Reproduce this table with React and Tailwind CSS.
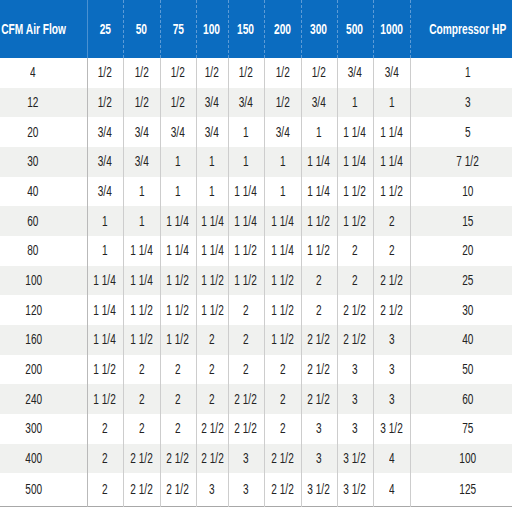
const sizes = ['25', '50', '75', '100', '150', '200', '300', '500', '1000'];

const rows = [
  ['4', ['1/2', '1/2', '1/2', '1/2', '1/2', '1/2', '1/2', '3/4', '3/4'], '1'],
  ['12', ['1/2', '1/2', '1/2', '3/4', '3/4', '1/2', '3/4', '1', '1'], '3'],
  ['20', ['3/4', '3/4', '3/4', '3/4', '1', '3/4', '1', '1 1/4', '1 1/4'], '5'],
  ['30', ['3/4', '3/4', '1', '1', '1', '1', '1 1/4', '1 1/4', '1 1/4'], '7 1/2'],
  ['40', ['3/4', '1', '1', '1', '1 1/4', '1', '1 1/4', '1 1/2', '1 1/2'], '10'],
  ['60', ['1', '1', '1 1/4', '1 1/4', '1 1/4', '1 1/4', '1 1/2', '1 1/2', '2'], '15'],
  ['80', ['1', '1 1/4', '1 1/4', '1 1/4', '1 1/2', '1 1/4', '1 1/2', '2', '2'], '20'],
  ['100', ['1 1/4', '1 1/4', '1 1/2', '1 1/2', '1 1/2', '1 1/2', '2', '2', '2 1/2'], '25'],
  ['120', ['1 1/4', '1 1/2', '1 1/2', '1 1/2', '2', '1 1/2', '2', '2 1/2', '2 1/2'], '30'],
  ['160', ['1 1/4', '1 1/2', '1 1/2', '2', '2', '1 1/2', '2 1/2', '2 1/2', '3'], '40'],
  ['200', ['1 1/2', '2', '2', '2', '2', '2', '2 1/2', '3', '3'], '50'],
  ['240', ['1 1/2', '2', '2', '2', '2 1/2', '2', '2 1/2', '3', '3'], '60'],
  ['300', ['2', '2', '2', '2 1/2', '2 1/2', '2', '3', '3', '3 1/2'], '75'],
  ['400', ['2', '2 1/2', '2 1/2', '2 1/2', '3', '2 1/2', '3', '3 1/2', '4'], '100'],
  ['500', ['2', '2 1/2', '2 1/2', '3', '3', '2 1/2', '3 1/2', '3 1/2', '4'], '125'],
];

function Narrow({ children, head }) {
  return (
    <span
      className={
        head
          ? 'inline-block scale-x-[0.68] whitespace-nowrap'
          : 'inline-block scale-x-[0.72] whitespace-nowrap'
      }
    >
      {children}
    </span>
  );
}

export default function App() {
  return (
    <div className="h-[512px] w-[512px] overflow-hidden bg-white font-['Liberation_Sans',Arial,sans-serif]">
      <table className="ml-[-20px] w-[545px] table-fixed border-collapse">
        <colgroup>
          <col className="w-[107px]" />
          <col className="w-[36px]" />
          <col className="w-[37px]" />
          <col className="w-[36px]" />
          <col className="w-[32px]" />
          <col className="w-[36px]" />
          <col className="w-[37px]" />
          <col className="w-[36px]" />
          <col className="w-[36px]" />
          <col className="w-[37px]" />
          <col className="w-[115px]" />
        </colgroup>
        <thead>
          <tr className="h-[58px] bg-[#0b6cc0] text-[15px] font-bold text-white">
            <th className="border-r border-[#4a91d2] p-0 text-center">
              <Narrow head>CFM Air Flow</Narrow>
            </th>
            {sizes.map((s) => (
              <th key={s} className="border-r border-dashed border-[#5d9bd6] p-0 text-center">
                <Narrow head>{s}</Narrow>
              </th>
            ))}
            <th className="p-0 text-center">
              <Narrow head>Compressor HP</Narrow>
            </th>
          </tr>
        </thead>
        <tbody className="text-[14px] text-[#222]">
          {rows.map(([cfm, vals, hp], i) => (
            <tr
              key={cfm}
              className={[
                i % 2 ? 'bg-[#f0f1ef]' : 'bg-white',
                i === rows.length - 1 ? 'h-[33.6px] border-b border-[#a8a8a8]' : 'h-[29.67px]',
              ].join(' ')}
            >
              <td className="border-r border-[#b9b9b9] p-0 text-center">
                <Narrow>{cfm}</Narrow>
              </td>
              {vals.map((v, j) => (
                <td key={j} className="border-r border-[#cdcdcd] p-0 text-center">
                  <Narrow>{v}</Narrow>
                </td>
              ))}
              <td className="p-0 text-center">
                <Narrow>{hp}</Narrow>
              </td>
            </tr>
          ))}
        </tbody>
      </table>
    </div>
  );
}
